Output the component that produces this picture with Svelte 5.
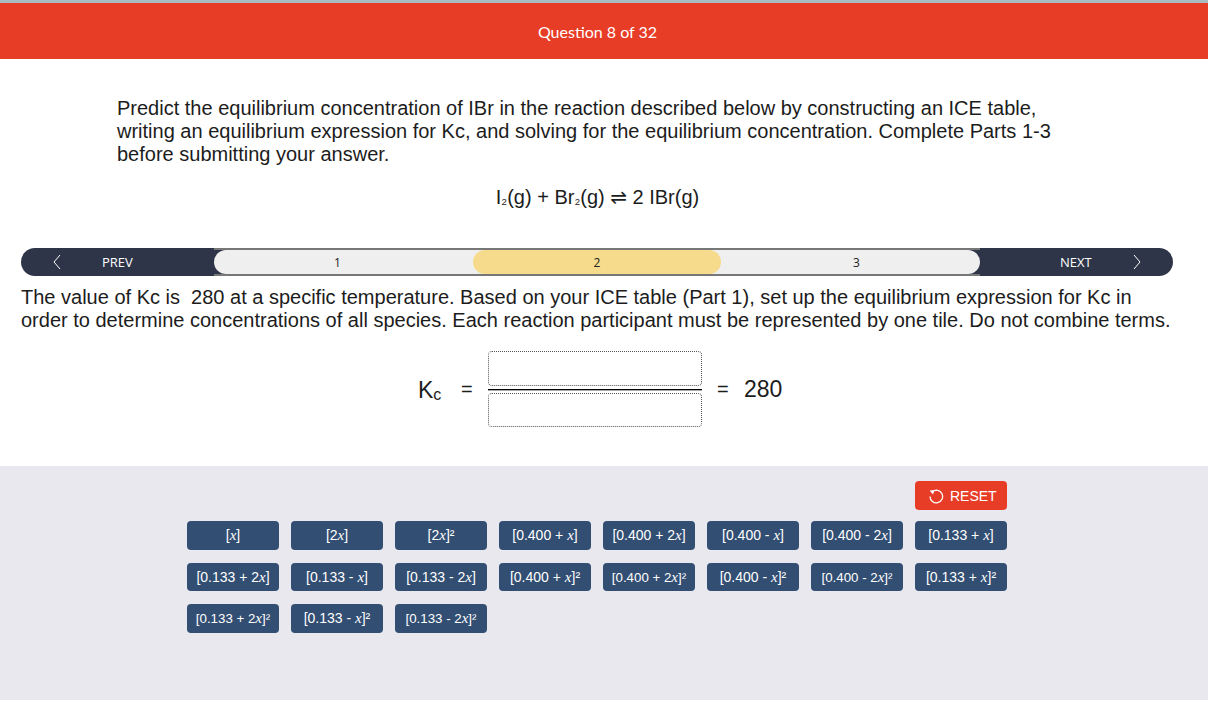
<script>
  const tiles = [
    ['[', 'x', ']'], ['[2', 'x', ']'], ['[2', 'x', ']²'], ['[0.400 + ', 'x', ']'],
    ['[0.400 + 2', 'x', ']'], ['[0.400 - ', 'x', ']'], ['[0.400 - 2', 'x', ']'], ['[0.133 + ', 'x', ']'],
    ['[0.133 + 2', 'x', ']'], ['[0.133 - ', 'x', ']'], ['[0.133 - 2', 'x', ']'], ['[0.400 + ', 'x', ']²'],
    ['[0.400 + 2', 'x', ']²'], ['[0.400 - ', 'x', ']²'], ['[0.400 - 2', 'x', ']²'], ['[0.133 + ', 'x', ']²'],
    ['[0.133 + 2', 'x', ']²'], ['[0.133 - ', 'x', ']²'], ['[0.133 - 2', 'x', ']²']
  ];

  // the longest labels shrink to fit the tile
  const isLong = (t) => t.join('').length >= 13;
</script>

<div class="page">
  <header class="banner">Question 8 of 32</header>

  <section class="question">
    <p class="prompt">Predict the equilibrium concentration of IBr in the reaction described below by constructing an ICE table, writing an equilibrium expression for Kc, and solving for the equilibrium concentration. Complete Parts 1-3 before submitting your answer.</p>
    <p class="reaction">I<span class="sb">₂</span>(g) + Br<span class="sb">₂</span>(g) <span class="arrows">⇌</span> 2 IBr(g)</p>
  </section>

  <nav class="steps">
    <button class="end prev">
      <svg width="10" height="16" viewBox="0 0 10 16"><path d="M8 1 L2 8 L8 15" fill="none" stroke="#fff" stroke-width="1"/></svg>
      <span>PREV</span>
    </button>
    <div class="track">
      <div class="rail">
        <span class="step first">1</span>
        <span class="step current">2</span>
        <span class="step last">3</span>
      </div>
    </div>
    <button class="end next">
      <span>NEXT</span>
      <svg width="10" height="16" viewBox="0 0 10 16"><path d="M2 1 L8 8 L2 15" fill="none" stroke="#fff" stroke-width="1"/></svg>
    </button>
  </nav>

  <p class="instructions">The value of Kc is&nbsp; 280 at a specific temperature. Based on your ICE table (Part 1), set up the equilibrium expression for Kc in order to determine concentrations of all species. Each reaction participant must be represented by one tile. Do not combine terms.</p>

  <div class="equation">
    <span class="kc">K<span class="kc-sub">c</span></span>
    <span class="eq first-eq">=</span>
    <div class="fraction">
      <div class="slot top"></div>
      <div class="bar"></div>
      <div class="slot"></div>
    </div>
    <span class="eq second-eq">=</span>
    <span class="value">280</span>
  </div>

  <section class="bank">
    <div class="inner">
      <div class="actions">
        <button class="reset">
          <svg width="16" height="16" viewBox="0 0 16 16">
            <path d="M4.4 3.6 A6.3 6.3 0 1 1 2 8.6" fill="none" stroke="#fff" stroke-width="1.3"/>
            <path d="M1.6 2.6 L6.4 2.2 L5 6.4 Z" fill="#fff"/>
          </svg>
          RESET
        </button>
      </div>
      <div class="tiles">
        {#each tiles as t}
          <button class="tile" class:long={isLong(t)}>{t[0]}<i>{t[1]}</i>{t[2]}</button>
        {/each}
      </div>
    </div>
  </section>
</div>

<style>
  :global(body) {
    margin: 0;
    background: #fff;
  }

  .page {
    width: 1208px;
    height: 701px;
    overflow: hidden;
    font-family: "Liberation Sans", Arial, sans-serif;
    color: #1c1c1c;
    display: flex;
    flex-direction: column;
  }

  button {
    border: none;
    font: inherit;
    cursor: pointer;
  }

  .banner {
    height: 56px;
    border-top: 3px solid #a9bcc2;
    background: #e73c26;
    color: #fff;
    font-family: Lato, sans-serif;
    font-size: 16px;
    line-height: 58px;
    text-align: center;
    padding-right: 13px;
    flex: none;
  }

  .question {
    padding: 38px 140px 0 117px;
    font-size: 20px;
    line-height: 23px;
    height: 152px;
    box-sizing: border-box;
    margin-bottom: 37px;
    flex: none;
  }

  .prompt {
    margin: 0;
    width: 940px;
  }

  .reaction {
    margin: 20px 0 0;
    position: relative;
    left: -117px;
    width: 1195px;
    text-align: center;
  }

  .sb {
    font-size: 15px;
  }

  .arrows {
    font-family: "DejaVu Sans", sans-serif;
    font-size: 20px;
  }

  .steps {
    flex: none;
    margin: 0 35px 0 21px;
    height: 28px;
    background: #2e3549;
    border-radius: 14px;
    display: flex;
    color: #fff;
    font-family: "Open Sans", sans-serif;
    font-size: 13px;
  }

  .end {
    background: none;
    color: #fff;
    display: flex;
    align-items: center;
    padding: 0;
    width: 193px;
    flex: none;
    box-sizing: border-box;
  }

  .prev {
    padding-left: 31px;
    gap: 40px;
  }

  .next {
    padding-left: 80px;
    gap: 40px;
  }

  .track {
    flex: 1;
    display: flex;
    border-top: 2px solid #777;
    border-bottom: 2px solid #777;
  }

  .rail {
    flex: 1;
    display: flex;
    background: #efefef;
    border-radius: 12px;
  }

  .step {
    display: flex;
    align-items: center;
    justify-content: center;
    color: #222;
    font-size: 12px;
    box-sizing: border-box;
    width: 259px;
  }

  .first {
    padding-right: 12px;
  }

  .last {
    padding-left: 12px;
  }

  .current {
    width: 248px;
    background: #f5db8b;
    border-radius: 12px;
  }

  .instructions {
    flex: none;
    margin: 10px 30px 0 21px;
    font-size: 20px;
    line-height: 23px;
  }

  .equation {
    flex: none;
    margin-top: 19px;
    height: 76px;
    padding-left: 418px;
    display: flex;
    align-items: center;
  }

  .kc {
    font-size: 23px;
    width: 43px;
    padding-top: 2px;
    box-sizing: border-box;
  }

  .kc-sub {
    font-size: 16px;
    position: relative;
    top: 2px;
  }

  .eq {
    font-size: 20px;
  }

  .first-eq {
    width: 27px;
  }

  .second-eq {
    margin-left: 15px;
    width: 27px;
  }

  .value {
    font-size: 23px;
  }

  .fraction {
    width: 214px;
  }

  .slot {
    height: 32px;
    border: 1px dotted #555;
    border-radius: 4px;
  }

  .slot.top {
    height: 33px;
  }

  .bar {
    height: 1px;
    background: #000;
    margin: 3px 0;
    box-shadow: 0 1px 0 #aaa;
  }

  .bank {
    margin-top: 39px;
    height: 234px;
    background: #e9e8ee;
    flex: none;
    padding: 15px 201px 0 187px;
    box-sizing: border-box;
  }

  .inner {
    width: 820px;
  }

  .actions {
    display: flex;
    justify-content: flex-end;
    margin-bottom: 11px;
  }

  .reset {
    width: 92px;
    height: 29px;
    background: #e73c26;
    color: #fff;
    border-radius: 4px;
    font-size: 14px;
    display: flex;
    align-items: center;
    gap: 6px;
    padding: 0 0 0 13px;
    box-sizing: border-box;
  }

  .tiles {
    display: grid;
    grid-template-columns: repeat(8, 92px);
    grid-template-rows: 29px 28px 29px;
    column-gap: 12px;
    row-gap: 13px;
  }

  .tile {
    background: #324e72;
    color: #fff;
    border-radius: 4px;
    font-size: 14px;
    padding: 0;
    white-space: nowrap;
  }

  .tile.long {
    font-size: 13.3px;
  }

  .tile i {
    font-family: "Liberation Serif", serif;
    font-size: 15px;
  }
</style>
